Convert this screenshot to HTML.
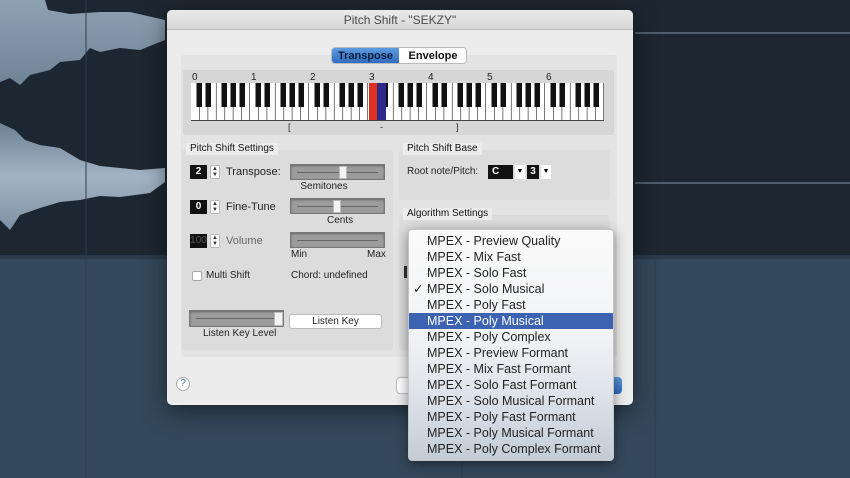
<!DOCTYPE html>
<html><head><meta charset="utf-8">
<style>
*{margin:0;padding:0;box-sizing:border-box}
body{width:850px;height:478px;overflow:hidden;position:relative;background:#33475a;font-family:"Liberation Sans",sans-serif}
.a{position:absolute}
.t{position:absolute;font-size:10px;color:#222;white-space:nowrap}
.num{position:absolute;background:#111;color:#fff;font-size:10px;font-weight:bold;text-align:center;line-height:14px}
.step{position:absolute;width:10px;height:14px;background:#fff;border:1px solid #bbb;border-radius:2px;font-size:6px;line-height:6px;text-align:center;color:#333}
.sl{position:absolute;background:#9c9c9c;border:1px solid #777;box-shadow:inset 0 1px 2px #666}
.sl:before{content:"";position:absolute;left:6px;right:6px;top:7px;height:1px;background:#666}
.th{position:absolute;top:1px;width:8px;height:13px;background:#f4f4f4;border:1px solid #bbb}
.grp{position:absolute;background:#dcdcdc;border-radius:3px}
.gl{position:absolute;font-size:10px;color:#111;background:#ececec;padding:0 4px;line-height:12px}
.mi{position:absolute;left:18px;font-size:12.5px;color:#222;line-height:16px;height:16px;width:186px}
</style></head><body>
<svg class="a" style="left:0;top:0" width="850" height="478">
<defs>
<linearGradient id="lg" x1="0" y1="0" x2="0" y2="1"><stop offset="0" stop-color="#8fa2b4"/><stop offset="1" stop-color="#6f8397"/></linearGradient>
<linearGradient id="lg2" x1="0" y1="0" x2="0" y2="1"><stop offset="0" stop-color="#6c8195"/><stop offset=".5" stop-color="#a3b4c4"/><stop offset="1" stop-color="#7d90a3"/></linearGradient>
</defs>
<rect width="850" height="258" fill="#1d2731"/>
<rect y="258" width="850" height="220" fill="#34485b"/>
<rect y="255" width="850" height="4" fill="#2b3b4b"/>
<path d="M0 0H45L48 10 70 14 100 12 130 12 165 20V40L140 50 120 48 100 52 90 48 80 60 60 62 50 70 30 75 20 85 10 78 0 82Z" fill="url(#lg)"/>
<path d="M0 123L15 130 25 140 40 145 60 148 80 160 100 166 120 168 140 170 165 168V182L150 193 120 197 100 196 80 200 60 202 40 208 20 215 10 230 0 220Z" fill="url(#lg2)"/>
<line x1="86" y1="0" x2="86" y2="478" stroke="#2e3e4d" stroke-width="1"/>
<line x1="635" y1="33" x2="850" y2="33" stroke="#8293a4" stroke-width="1"/>
<line x1="635" y1="183" x2="850" y2="183" stroke="#8293a4" stroke-width="1"/>
<line x1="462" y1="258" x2="462" y2="478" stroke="#2c3e50"/>
<line x1="655" y1="258" x2="655" y2="478" stroke="#2c3e50"/>
</svg>

<div class="a" style="left:167px;top:10px;width:466px;height:395px;background:#ececec;border-radius:5px;box-shadow:0 6px 24px rgba(0,0,0,.5)"></div>
<div class="a" style="left:167px;top:10px;width:466px;height:20px;background:linear-gradient(#ebebeb,#d6d6d6);border-radius:5px 5px 0 0;border-bottom:1px solid #bdbdbd;text-align:center;font-size:12px;line-height:20px;color:#4a4a4a">Pitch Shift - "SEKZY"</div>
<div class="a" style="left:181px;top:55px;width:436px;height:302px;background:#e3e3e3;border-radius:3px"></div>
<div class="a" style="left:331px;top:47px;width:136px;height:17px;border-radius:4px;background:#fff;border:1px solid #bbb;overflow:hidden">
 <div class="a" style="left:0;top:0;width:67px;height:16px;background:linear-gradient(#5c9be0,#2f69bb);font-size:11px;line-height:16px;text-align:center;color:#0c1d3d;font-weight:bold">Transpose</div>
 <div class="a" style="left:67px;top:0;width:68px;height:16px;font-size:11px;line-height:16px;text-align:center;color:#111;font-weight:bold">Envelope</div>
</div>
<div class="a" style="left:183px;top:70px;width:431px;height:65px;background:#d6d6d6;border-radius:2px"></div>
<div class="t" style="left:192px;top:72px">0</div><div class="t" style="left:251px;top:72px">1</div><div class="t" style="left:310px;top:72px">2</div><div class="t" style="left:369px;top:72px">3</div><div class="t" style="left:428px;top:72px">4</div><div class="t" style="left:487px;top:72px">5</div><div class="t" style="left:546px;top:72px">6</div>
<svg class="a" style="left:191px;top:83px" width="413" height="38">
<defs><pattern id="oct" x="0" y="0" width="59" height="38" patternUnits="userSpaceOnUse">
<rect width="59" height="38" fill="#fff"/>
<g stroke="#555" stroke-width=".8"><line x1="8.43" y1="0" x2="8.43" y2="38"/><line x1="16.86" y1="0" x2="16.86" y2="38"/><line x1="25.29" y1="0" x2="25.29" y2="38"/><line x1="33.71" y1="0" x2="33.71" y2="38"/><line x1="42.14" y1="0" x2="42.14" y2="38"/><line x1="50.57" y1="0" x2="50.57" y2="38"/><line x1="58.6" y1="0" x2="58.6" y2="38"/></g>
<g fill="#111"><rect x="5.5" width="5.5" height="24"/><rect x="14.5" width="5.5" height="24"/><rect x="30.5" width="5.5" height="24"/><rect x="39.5" width="5.5" height="24"/><rect x="48.5" width="5.5" height="24"/></g>
</pattern></defs>
<rect width="413" height="38" fill="url(#oct)"/>
<rect x="178" width="8" height="38" fill="#e0301f"/>
<rect x="186" width="9" height="38" fill="#2e2a8c"/>
<line x1="0" y1="37.5" x2="413" y2="37.5" stroke="#444"/>
</svg>
<div class="t" style="left:288px;top:122px;font-size:9px">[</div>
<div class="t" style="left:380px;top:122px;font-size:9px">-</div>
<div class="t" style="left:456px;top:122px;font-size:9px">]</div>

<div class="grp" style="left:182px;top:150px;width:211px;height:200px"></div>
<div class="gl" style="left:186px;top:143px">Pitch Shift Settings</div>
<div class="num" style="left:190px;top:165px;width:17px;height:14px">2</div>
<div class="step" style="left:210px;top:165px">▲<br>▼</div>
<div class="t" style="left:226px;top:166px;font-size:11px">Transpose:</div>
<div class="sl" style="left:290px;top:164px;width:95px;height:16px"><div class="th" style="left:48px"></div></div>
<div class="t" style="left:300px;top:181px;width:48px;text-align:center">Semitones</div>
<div class="num" style="left:190px;top:200px;width:17px;height:14px">0</div>
<div class="step" style="left:210px;top:200px">▲<br>▼</div>
<div class="t" style="left:226px;top:201px;font-size:11px">Fine-Tune</div>
<div class="sl" style="left:290px;top:198px;width:95px;height:16px"><div class="th" style="left:42px"></div></div>
<div class="t" style="left:327px;top:215px">Cents</div>
<div class="num" style="left:190px;top:234px;width:17px;height:14px;color:#555;font-weight:normal">100</div>
<div class="step" style="left:210px;top:234px">▲<br>▼</div>
<div class="t" style="left:226px;top:235px;font-size:11px;color:#666">Volume</div>
<div class="sl" style="left:290px;top:232px;width:95px;height:16px"></div>
<div class="t" style="left:291px;top:249px">Min</div>
<div class="t" style="left:367px;top:249px">Max</div>
<div class="a" style="left:192px;top:271px;width:10px;height:10px;background:#fff;border:1px solid #aaa;border-radius:2px"></div>
<div class="t" style="left:206px;top:270px">Multi Shift</div>
<div class="t" style="left:291px;top:270px">Chord: undefined</div>
<div class="sl" style="left:189px;top:310px;width:95px;height:17px"><div class="th" style="left:84px;width:9px;height:14px"></div></div>
<div class="t" style="left:203px;top:328px">Listen Key Level</div>
<div class="a" style="left:289px;top:314px;width:93px;height:15px;background:#fff;border:1px solid #bbb;border-radius:3px;font-size:10px;line-height:13px;text-align:center;color:#222">Listen Key</div>

<div class="grp" style="left:399px;top:150px;width:211px;height:50px"></div>
<div class="gl" style="left:403px;top:143px">Pitch Shift Base</div>
<div class="t" style="left:407px;top:166px">Root note/Pitch:</div>
<div class="num" style="left:488px;top:165px;width:25px;height:14px;text-align:left;padding-left:4px">C</div>
<div class="a" style="left:515px;top:165px;width:10px;height:14px;background:#fff;font-size:7px;text-align:center;line-height:14px">▼</div>
<div class="num" style="left:527px;top:165px;width:12px;height:14px">3</div>
<div class="a" style="left:541px;top:165px;width:10px;height:14px;background:#fff;font-size:7px;text-align:center;line-height:14px">▼</div>
<div class="grp" style="left:399px;top:215px;width:211px;height:135px"></div>
<div class="gl" style="left:403px;top:208px">Algorithm Settings</div>
<div class="a" style="left:404px;top:266px;width:3px;height:12px;background:#333"></div>

<div class="a" style="left:176px;top:377px;width:14px;height:14px;border-radius:50%;background:#fff;border:1px solid #aaa;font-size:10px;text-align:center;line-height:12px;color:#3a6fc0">?</div>
<div class="a" style="left:396px;top:377px;width:30px;height:17px;background:#fff;border:1px solid #bbb;border-radius:4px"></div>
<div class="a" style="left:600px;top:377px;width:22px;height:17px;background:linear-gradient(#5c9be0,#2f69bb);border-radius:4px"></div>

<div class="a" style="left:408px;top:229px;width:206px;height:232px;border-radius:4px;background:linear-gradient(#fafafa 0%,#f2f3f5 45%,#dfe4ea 70%,#c3ccd6 100%);box-shadow:0 3px 12px rgba(0,0,0,.45);border:1px solid #c4c4c4">
<div class="a" style="left:0;top:83px;width:204px;height:16px;background:#3c62b2"></div>
<div class="mi" style="top:3px">MPEX - Preview Quality</div>
<div class="mi" style="top:19px">MPEX - Mix Fast</div>
<div class="mi" style="top:35px">MPEX - Solo Fast</div>
<div class="mi" style="top:51px"><span style="position:absolute;left:-14px">✓</span>MPEX - Solo Musical</div>
<div class="mi" style="top:67px">MPEX - Poly Fast</div>
<div class="mi" style="top:83px;color:#fff">MPEX - Poly Musical</div>
<div class="mi" style="top:99px">MPEX - Poly Complex</div>
<div class="mi" style="top:115px">MPEX - Preview Formant</div>
<div class="mi" style="top:131px">MPEX - Mix Fast Formant</div>
<div class="mi" style="top:147px">MPEX - Solo Fast Formant</div>
<div class="mi" style="top:163px">MPEX - Solo Musical Formant</div>
<div class="mi" style="top:179px">MPEX - Poly Fast Formant</div>
<div class="mi" style="top:195px">MPEX - Poly Musical Formant</div>
<div class="mi" style="top:211px">MPEX - Poly Complex Formant</div>
</div>
</body></html>
